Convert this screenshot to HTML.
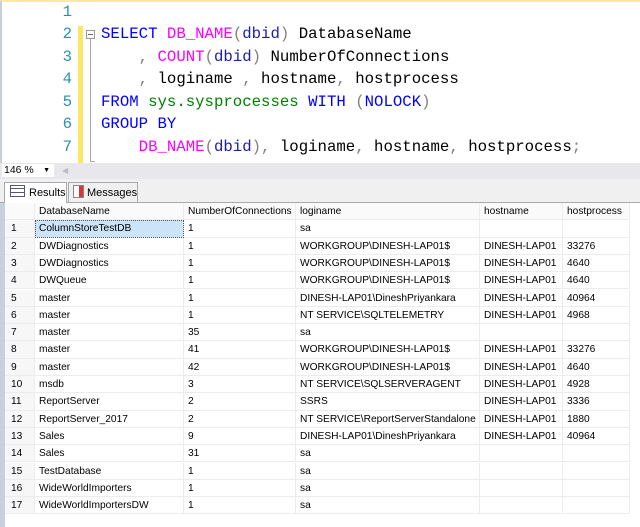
<!DOCTYPE html>
<html><head><style>
body{margin:0;width:640px;height:527px;overflow:hidden;background:#fff;position:relative;font-family:"Liberation Sans",sans-serif}
.ed{position:absolute;left:0;top:0;width:640px;height:163px;background:#fff;border-top:2px solid #fbe9a0;box-sizing:border-box;border-left:2px solid #c9d0dd}
.ln{position:absolute;left:40px;width:30px;text-align:right;font:15.7px "Liberation Mono",monospace;color:#2b91af}
.cd{position:absolute;left:99px;font:15.7px "Liberation Mono",monospace;color:#000;white-space:pre}
.k{color:#0000ff}.f{color:#ff00ff}.g{color:#808080}.s{color:#008000}.v{color:#1c1cb0}
.yb{position:absolute;left:76px;top:24px;width:5px;height:139px;background:#fde664}
.tb{position:absolute;left:0;top:163px;width:640px;height:16px;background:#e8e8ec}
.zm{position:absolute;left:2px;top:164px;width:52px;height:13px;background:#fff;font-size:10.5px;line-height:13px;padding-left:2px;box-sizing:border-box}
.tabs{position:absolute;left:0;top:179px;width:640px;height:23px;background:#f0f0f0;border-bottom:1px solid #aaa}
.tab{position:absolute;top:3px;height:20px;font-size:11px;line-height:20px;box-sizing:border-box;border:1px solid #aaa;border-bottom:none;white-space:nowrap;overflow:hidden}
.grid{position:absolute;left:0;top:203px;width:640px;height:324px;background:#fff;border-left:5px solid #c9d0dd;box-sizing:border-box}
.r{position:absolute;left:5px;height:17.3px;font-size:10.2px;line-height:17px;color:#000}
.c{position:absolute;top:0;height:17.3px;box-sizing:border-box;border-right:1px solid #ececec;border-bottom:1px solid #ececec;padding-left:4px;white-space:nowrap;overflow:hidden}
</style></head><body>
<div class="ed">
<div class="yb"></div>
<div style="position:absolute;left:84px;top:28px;width:9px;height:9px;border:1px solid #999;box-sizing:border-box;background:#fff"><div style="position:absolute;left:1px;top:3px;width:5px;height:1px;background:#666"></div></div>
<div style="position:absolute;left:88px;top:37px;width:1px;height:122px;background:#aaa"></div>
<div style="position:absolute;left:88px;top:159px;width:5px;height:1px;background:#aaa"></div>
<div class="ln" style="top:1px">1</div>
<div class="ln" style="top:23px">2</div>
<div class="ln" style="top:46px">3</div>
<div class="ln" style="top:68px">4</div>
<div class="ln" style="top:91px">5</div>
<div class="ln" style="top:113px">6</div>
<div class="ln" style="top:136px">7</div>
<div class="cd" style="top:23px"><span class="k">SELECT</span> <span class="f">DB_NAME</span><span class="g">(</span><span class="v">dbid</span><span class="g">)</span> DatabaseName</div>
<div class="cd" style="top:46px">    <span class="g">,</span> <span class="f">COUNT</span><span class="g">(</span><span class="v">dbid</span><span class="g">)</span> NumberOfConnections</div>
<div class="cd" style="top:68px">    <span class="g">,</span> loginame <span class="g">,</span> hostname<span class="g">,</span> hostprocess</div>
<div class="cd" style="top:91px"><span class="k">FROM</span> <span class="s">sys.sysprocesses</span> <span class="k">WITH</span> <span class="g">(</span><span class="k">NOLOCK</span><span class="g">)</span></div>
<div class="cd" style="top:113px"><span class="k">GROUP BY</span></div>
<div class="cd" style="top:136px">    <span class="f">DB_NAME</span><span class="g">(</span><span class="v">dbid</span><span class="g">),</span> loginame<span class="g">,</span> hostname<span class="g">,</span> hostprocess<span class="g">;</span></div>
</div>
<div class="tb"></div>
<div class="zm">146 %<span style="position:absolute;right:4px;font-size:7px">▼</span></div>
<div style="position:absolute;left:62px;top:166px;font-size:8px;color:#bbb">◀</div>
<div class="tabs">
<div class="tab" style="left:4px;width:63px;background:#fff;height:21px"><span style="display:inline-block;width:13px;height:10px;border:1px solid #557;margin:0 4px 0 5px;vertical-align:-1px;background:linear-gradient(#fff 0 2px,#557 2px 3px,#fff 3px 6px,#557 6px 7px,#fff 7px)"></span>Results</div>
<div class="tab" style="left:68px;width:70px;background:#f0f0f0"><span style="display:inline-block;width:9px;height:11px;border:1px solid #888;margin:0 3px 0 4px;vertical-align:-2px;background:linear-gradient(90deg,#fff 55%,#d33 55%)"></span>Messages</div>
</div>
<div class="grid"></div>
<div id="g"></div>
<script>
var cols=[[5,30],[35,149],[184,112],[296,184],[480,83],[563,67]];
var data=[["","DatabaseName","NumberOfConnections","loginame","hostname","hostprocess"],
["1","ColumnStoreTestDB","1","sa","",""],
["2","DWDiagnostics","1","WORKGROUP\\DINESH-LAP01$","DINESH-LAP01","33276"],
["3","DWDiagnostics","1","WORKGROUP\\DINESH-LAP01$","DINESH-LAP01","4640"],
["4","DWQueue","1","WORKGROUP\\DINESH-LAP01$","DINESH-LAP01","4640"],
["5","master","1","DINESH-LAP01\\DineshPriyankara","DINESH-LAP01","40964"],
["6","master","1","NT SERVICE\\SQLTELEMETRY","DINESH-LAP01","4968"],
["7","master","35","sa","",""],
["8","master","41","WORKGROUP\\DINESH-LAP01$","DINESH-LAP01","33276"],
["9","master","42","WORKGROUP\\DINESH-LAP01$","DINESH-LAP01","4640"],
["10","msdb","3","NT SERVICE\\SQLSERVERAGENT","DINESH-LAP01","4928"],
["11","ReportServer","2","SSRS","DINESH-LAP01","3336"],
["12","ReportServer_2017","2","NT SERVICE\\ReportServerStandalone","DINESH-LAP01","1880"],
["13","Sales","9","DINESH-LAP01\\DineshPriyankara","DINESH-LAP01","40964"],
["14","Sales","31","sa","",""],
["15","TestDatabase","1","sa","",""],
["16","WideWorldImporters","1","sa","",""],
["17","WideWorldImportersDW","1","sa","",""]];
var h="";
data.forEach(function(row,i){
 var top=203+i*17.3;
 h+='<div class="r" style="top:'+top+'px;width:625px">';
 row.forEach(function(t,j){
  var bg=(j==0||i==0)?'#f7f7f7':'#fff';
  if(i==0)bg='#fafafa';
  var st='left:'+(cols[j][0]-5)+'px;width:'+cols[j][1]+'px;background:'+bg+';';
  if(i==1&&j==1)st+='background:#cce4f7;outline:1px dotted #555;outline-offset:-1px;';
  if(j==0)st+='padding-left:6px;';
  h+='<div class="c" style="'+st+'">'+t+'</div>';
 });
 h+='</div>';
});
document.getElementById('g').innerHTML=h;
</script>
</body></html>
